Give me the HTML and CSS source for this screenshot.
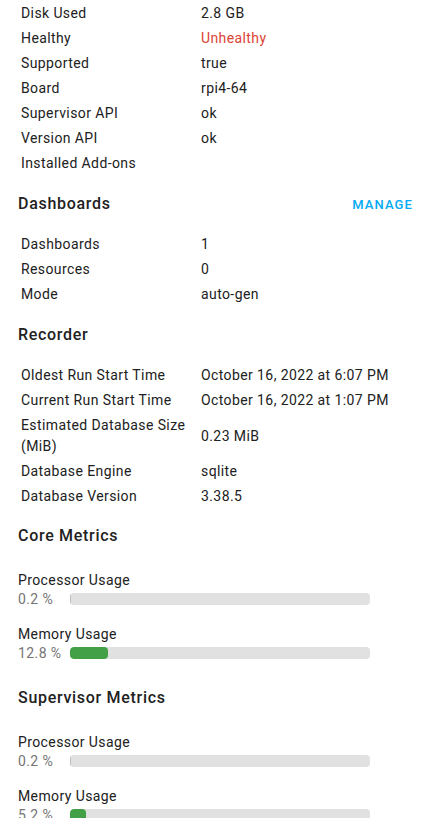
FILE: index.html
```html
<!DOCTYPE html>
<html>
<head>
<meta charset="utf-8">
<link rel="stylesheet" href="styles.css">
</head>
<body>
<div class="viewport">
  <div class="content">
    <div class="info">
      <div class="row"><span class="label">Disk Used</span><span class="value">2.8 GB</span></div>
      <div class="row"><span class="label">Healthy</span><span class="value error">Unhealthy</span></div>
      <div class="row"><span class="label">Supported</span><span class="value">true</span></div>
      <div class="row"><span class="label">Board</span><span class="value">rpi4-64</span></div>
      <div class="row"><span class="label">Supervisor API</span><span class="value">ok</span></div>
      <div class="row"><span class="label">Version API</span><span class="value">ok</span></div>
      <div class="row"><span class="label">Installed Add-ons</span><span class="value"></span></div>
    </div>

    <div class="section-head">
      <h3 class="heading">Dashboards</h3>
      <span class="action">MANAGE</span>
    </div>
    <div class="info">
      <div class="row"><span class="label">Dashboards</span><span class="value">1</span></div>
      <div class="row"><span class="label">Resources</span><span class="value">0</span></div>
      <div class="row"><span class="label">Mode</span><span class="value">auto-gen</span></div>
    </div>

    <div class="section-head">
      <h3 class="heading">Recorder</h3>
    </div>
    <div class="info">
      <div class="row"><span class="label">Oldest Run Start Time</span><span class="value">October 16, 2022 at 6:07 PM</span></div>
      <div class="row"><span class="label">Current Run Start Time</span><span class="value">October 16, 2022 at 1:07 PM</span></div>
      <div class="row"><span class="label">Estimated Database Size (MiB)</span><span class="value">0.23 MiB</span></div>
      <div class="row"><span class="label">Database Engine</span><span class="value">sqlite</span></div>
      <div class="row"><span class="label">Database Version</span><span class="value">3.38.5</span></div>
    </div>

    <div class="section-head metrics-head">
      <h3 class="heading">Core Metrics</h3>
    </div>
    <div class="metrics">
      <div class="metric">
        <div class="metric-label">Processor Usage</div>
        <div class="metric-row"><span class="pct">0.2 %</span><div class="bar"><div class="fill low" style="width:0.2%"></div></div></div>
      </div>
      <div class="metric">
        <div class="metric-label">Memory Usage</div>
        <div class="metric-row"><span class="pct">12.8 %</span><div class="bar"><div class="fill" style="width:12.8%"></div></div></div>
      </div>
    </div>

    <div class="section-head metrics-head">
      <h3 class="heading">Supervisor Metrics</h3>
    </div>
    <div class="metrics">
      <div class="metric">
        <div class="metric-label">Processor Usage</div>
        <div class="metric-row"><span class="pct">0.2 %</span><div class="bar"><div class="fill low" style="width:0.2%"></div></div></div>
      </div>
      <div class="metric">
        <div class="metric-label">Memory Usage</div>
        <div class="metric-row"><span class="pct">5.2 %</span><div class="bar"><div class="fill" style="width:5.2%"></div></div></div>
      </div>
    </div>
  </div>
</div>
</body>
</html>
```

FILE: styles.css
```css
* { box-sizing: border-box; }
html, body {
  margin: 0;
  padding: 0;
  background: #ffffff;
}
body {
  font-family: Roboto, "Noto Sans", "Liberation Sans", sans-serif;
  color: #212121;
  font-size: 14px;
  letter-spacing: 0.4px;
}
.viewport {
  height: 818px;
  overflow: hidden;
}
.content {
  padding: 1px 28px 0 18px;
}
.info {
  display: flex;
  flex-direction: column;
  padding-left: 3px;
}
.row {
  display: grid;
  grid-template-columns: 180px 1fr;
  align-items: center;
  padding: 2px 0;
  line-height: 21px;
}
.label { padding-right: 8px; }
.error { color: #db4437; }

.section-head {
  display: flex;
  align-items: center;
  justify-content: space-between;
  margin: 16px 0 16px;
  height: 24px;
}
.heading {
  margin: 0;
  font-size: 16px;
  font-weight: 500;
  line-height: 24px;
  letter-spacing: 0.7px;
  color: #212121;
}
.action {
  color: #03a9f4;
  font-size: 13px;
  font-weight: 500;
  letter-spacing: 1.1px;
  margin-right: -1px;
}
.metrics-head {
  margin: 15px 0 23px;
}
.metrics {
  display: flex;
  flex-direction: column;
  gap: 16px;
  margin-bottom: 23px;
}
.metric-label {
  line-height: 18px;
}
.metric-row {
  display: flex;
  align-items: center;
  height: 20px;
}
.pct {
  width: 52px;
  color: #757575;
}
.bar {
  width: 300px;
  height: 12px;
  border-radius: 4px;
  background: #e1e1e1;
  overflow: hidden;
}
.fill {
  height: 100%;
  background: #43a047;
  border-radius: 4px;
}
.fill.low {
  background: #bdbdbd;
  min-width: 1px;
}
```
